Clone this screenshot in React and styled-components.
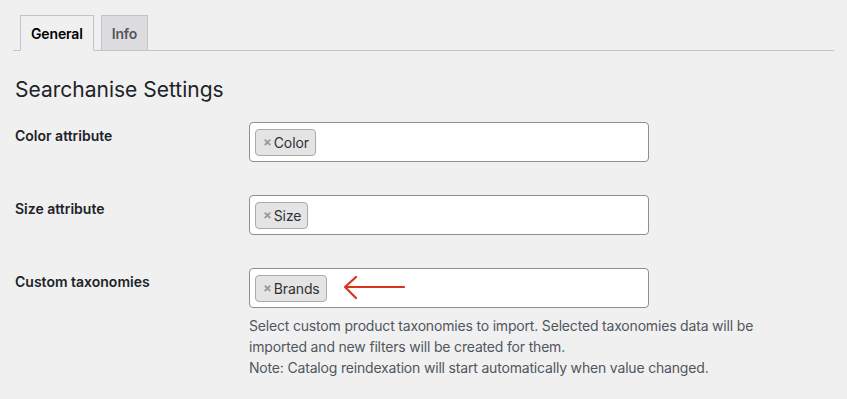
import styled, { createGlobalStyle } from "styled-components"

const Global = createGlobalStyle`
body {
margin: 0;
background: #f0f0f1;
font-family: Inter, "Noto Sans", "Liberation Sans", sans-serif;
color: #1d2327;
}
`

const Page = styled.div`
padding: 15px 13px 0 13px;
`

const TabBar = styled.div`
display: flex;
gap: 7px;
padding-left: 7px;
border-bottom: 1px solid #c3c4c7;
`

const Tab = styled.div`
height: 36px;
box-sizing: border-box;
padding: 0 10px;
margin-bottom: -1px;
display: flex;
align-items: center;
font-size: 14px;
font-weight: 600;
letter-spacing: -0.15px;
border: 1px solid #c3c4c7;
border-bottom-color: ${p => (p.active ? "#f0f0f1" : "#c3c4c7")};
background: ${p => (p.active ? "#f0f0f1" : "#dcdcde")};
color: ${p => (p.active ? "#000" : "#50575e")};
`

const Title = styled.h2`
margin: 25px 0 0 2px;
font-size: 21px;
font-weight: 400;
color: #1d2327;
line-height: 28px;
`

const Table = styled.div`
margin-top: 18px;
display: grid;
grid-template-columns: 234px 400px;
row-gap: 33px;
padding-left: 2px;
`

const Label = styled.div`
font-size: 14px;
font-weight: 600;
padding-top: 5px;
line-height: 18px;
`

const Field = styled.div`
display: flex;
flex-direction: column;
`

const Select = styled.div`
height: 40px;
box-sizing: border-box;
border: 1px solid #8c8f94;
border-radius: 4px;
background: #fff;
display: flex;
align-items: center;
padding-left: 5px;
gap: 16px;
`

const Chip = styled.div`
height: 27px;
box-sizing: border-box;
display: flex;
align-items: center;
padding: 0 6px 0 7px;
background: #e4e4e4;
border: 1px solid #aaa;
border-radius: 4px;
font-size: 14px;
letter-spacing: -0.1px;
color: #2c3338;
`

const Remove = styled.span`
color: #999;
font-weight: 700;
font-size: 13px;
margin-right: 2px;
`

const Help = styled.p`
margin: 7px 0 0 0;
font-size: 14px;
line-height: 21px;
letter-spacing: -0.18px;
color: #50575e;
width: 560px;
`

const Arrow = () => (
    <svg width="62" height="24" viewBox="0 0 62 24">
        <path d="M61 11H2M13 1L2 11L13 22" fill="none" stroke="#d9341c" strokeWidth="2.2" strokeLinecap="round" strokeLinejoin="round" />
    </svg>
)

const rows = [
    { label: "Color attribute", tag: "Color" },
    { label: "Size attribute", tag: "Size" },
    { label: "Custom taxonomies", tag: "Brands", arrow: true },
]

export default function App() {
    return (
        <Page>
            <Global />
            <TabBar>
                <Tab active>General</Tab>
                <Tab>Info</Tab>
            </TabBar>
            <Title>Searchanise Settings</Title>
            <Table>
                {rows.map(r => (
                    <>
                        <Label key={r.label}>{r.label}</Label>
                        <Field key={r.tag}>
                            <Select>
                                <Chip>
                                    <Remove>×</Remove>
                                    {r.tag}
                                </Chip>
                                {r.arrow && <Arrow />}
                            </Select>
                            {r.arrow && (
                                <Help>
                                    Select custom product taxonomies to import. Selected taxonomies data will be imported and new filters will be created for them.
                                    <br />
                                    Note: Catalog reindexation will start automatically when value changed.
                                </Help>
                            )}
                        </Field>
                    </>
                ))}
            </Table>
        </Page>
    )
}
